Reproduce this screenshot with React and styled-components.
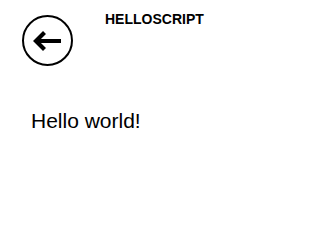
import React from 'react';
import styled, { createGlobalStyle } from 'styled-components';

const GlobalStyle = createGlobalStyle`
  html, body {
    margin: 0;
    padding: 0;
    background: #ffffff;
  }
  body {
    font-family: "Liberation Sans", Arial, sans-serif;
    color: #000000;
  }
`;

const Page = styled.div`
  width: 324px;
  height: 243px;
  display: flex;
  flex-direction: column;
`;

const Header = styled.header`
  display: flex;
  align-items: flex-start;
  padding: 11px 0 0 22px;
`;

const BackButton = styled.button`
  box-sizing: border-box;
  width: 51px;
  height: 51px;
  margin-top: 4px;
  padding: 0;
  border: 2px solid #000;
  border-radius: 50%;
  background: transparent;
  display: flex;
  align-items: center;
  justify-content: center;
  cursor: pointer;
`;

const Title = styled.h1`
  margin: 0 0 0 32px;
  font-size: 14px;
  font-weight: bold;
  line-height: normal;
`;

const Content = styled.main`
  padding: 43px 0 0 31px;
  font-size: 21px;
  line-height: normal;
`;

const ArrowIcon = () => (
  <svg width="30" height="22" viewBox="0 0 30 22" fill="none">
    <path
      d="M28 11 H4 M11.5 2.5 L3 11 L11.5 19.5"
      stroke="#000"
      strokeWidth="4.2"
      strokeLinejoin="miter"
    />
  </svg>
);

export default function App() {
  return (
    <>
      <GlobalStyle />
      <Page>
        <Header>
          <BackButton aria-label="Back">
            <ArrowIcon />
          </BackButton>
          <Title>HELLOSCRIPT</Title>
        </Header>
        <Content>Hello world!</Content>
      </Page>
    </>
  );
}
